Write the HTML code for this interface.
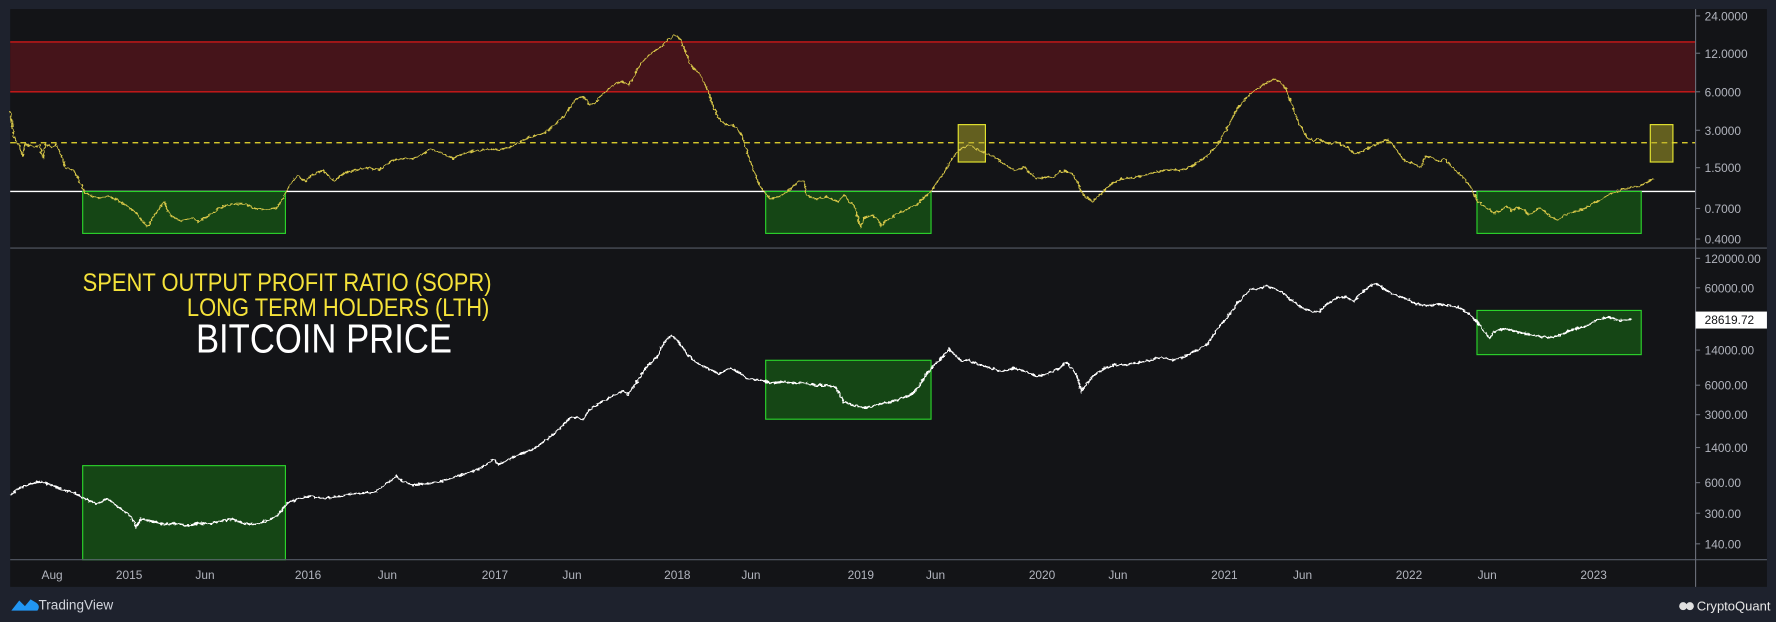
<!DOCTYPE html>
<html><head><meta charset="utf-8"><style>
html,body{margin:0;padding:0;background:#1e222d;width:1776px;height:622px;overflow:hidden}
svg{display:block}
text{font-family:"Liberation Sans",sans-serif}
</style></head><body>
<svg width="1776" height="622" viewBox="0 0 1568 549" preserveAspectRatio="none" xmlns="http://www.w3.org/2000/svg">
<defs>
<filter id="j" x="-5%" y="-20%" width="110%" height="140%">
<feTurbulence type="fractalNoise" baseFrequency="0.35" numOctaves="2" seed="3" result="n"/>
<feDisplacementMap in="SourceGraphic" in2="n" scale="3.5" xChannelSelector="R" yChannelSelector="G"/>
</filter>
</defs>
<rect x="0" y="0" width="1568" height="549" fill="#1e222d"/>
<rect x="9" y="8" width="1551" height="510" fill="#131417"/>
<rect x="9" y="37" width="1488" height="44" fill="#45141a"/>
<line x1="9" y1="37" x2="1497" y2="37" stroke="#d01818" stroke-width="1.2"/>
<line x1="9" y1="81" x2="1497" y2="81" stroke="#d01818" stroke-width="1.2"/>
<line x1="9" y1="126" x2="1497" y2="126" stroke="#f0e030" stroke-width="1.2" stroke-dasharray="5,4"/>
<line x1="9" y1="169" x2="1497" y2="169" stroke="#ffffff" stroke-width="1.2"/>
<g fill="#154615" stroke="#2bd42b" stroke-width="1">
<rect x="73" y="169" width="179" height="37"/>
<rect x="676" y="169" width="146" height="37"/>
<rect x="1304" y="169" width="145" height="37"/>
<rect x="73" y="411" width="179" height="83"/>
<rect x="676" y="318" width="146" height="52"/>
<rect x="1304" y="274" width="145" height="39"/>
</g>
<g fill="rgba(180,170,40,0.5)" stroke="#e8e830" stroke-width="1">
<rect x="846" y="110" width="24" height="33"/>
<rect x="1457" y="110" width="20" height="33"/>
</g>
<polyline filter="url(#j)" fill="none" stroke="#d8c848" stroke-width="1.1" points="9,98 12,120 17,128 20,138 22,127 30,130 35,128 38,140 40,127 45,130 50,128 55,140 58,148 65,150 70,160 75,170 80,173 88,175 95,173 100,175 110,180 120,188 130,200 135,192 140,185 145,178 150,190 160,195 170,192 175,196 185,190 195,183 205,180 215,180 225,184 235,185 245,183 250,175 255,165 262,155 270,160 275,155 285,150 290,155 295,160 305,152 315,150 325,148 335,150 345,142 355,140 365,140 375,135 380,132 390,135 400,140 410,135 420,133 430,132 440,132 450,130 460,125 470,120 480,118 490,110 500,100 508,88 515,85 520,92 525,92 530,85 540,76 548,72 555,75 560,67 565,57 575,47 585,40 590,35 595,31 600,34 605,45 610,58 618,65 625,80 630,95 635,105 640,110 645,110 650,112 655,120 660,135 665,150 670,162 675,170 680,175 690,173 700,165 705,160 710,160 712,172 720,176 730,174 740,178 745,172 750,178 755,183 758,195 760,200 763,192 770,190 775,193 778,200 782,195 790,190 800,185 810,180 815,175 822,169 828,160 835,150 840,140 845,135 850,130 855,128 860,130 865,133 870,135 880,140 885,144 895,150 905,148 910,153 915,158 925,156 930,157 935,152 940,151 945,152 950,158 955,170 960,175 965,178 970,173 975,168 980,163 990,158 1000,157 1010,155 1020,152 1030,150 1045,150 1055,145 1065,138 1075,128 1085,110 1090,100 1095,92 1105,82 1115,75 1125,70 1130,72 1135,78 1140,90 1145,105 1150,115 1155,122 1160,125 1163,122 1170,126 1175,127 1180,125 1185,128 1190,130 1195,135 1200,135 1205,132 1210,130 1220,125 1225,123 1230,128 1235,135 1240,142 1250,145 1255,148 1258,138 1265,139 1270,143 1275,140 1280,145 1285,150 1295,160 1300,168 1305,178 1315,185 1320,188 1325,186 1330,182 1335,186 1340,183 1345,185 1350,190 1355,186 1360,184 1365,188 1370,192 1375,194 1380,191 1385,188 1395,186 1400,184 1405,180 1410,178 1420,172 1430,168 1440,165 1445,165 1450,163 1456,160 1460,158"/>
<line x1="9" y1="219" x2="1560" y2="219" stroke="#555a66" stroke-width="1"/>
<line x1="9" y1="494" x2="1560" y2="494" stroke="#555a66" stroke-width="1"/>
<line x1="1497" y1="8" x2="1497" y2="518" stroke="#6a6e78" stroke-width="1"/>
<polyline filter="url(#j)" fill="none" stroke="#ffffff" stroke-width="1.4" points="9,437 15,432 25,428 35,425 45,428 55,432 65,435 75,440 85,445 95,440 105,448 115,455 120,465 125,458 135,460 145,463 155,462 165,464 175,462 185,462 195,460 205,458 215,462 225,463 235,460 245,455 255,443 265,440 275,438 285,440 300,438 310,436 320,435 330,435 340,428 345,424 350,420 355,425 365,428 375,427 390,425 405,420 420,415 430,410 435,405 440,410 450,405 460,400 470,397 480,390 490,382 497,375 505,368 515,370 520,362 530,355 540,350 550,345 555,348 560,340 565,333 570,325 575,320 580,315 585,305 590,298 593,296 598,300 605,310 612,318 618,322 625,325 635,330 645,325 655,330 660,335 670,335 680,338 690,337 700,338 710,338 720,340 730,340 738,342 745,355 755,358 765,360 775,357 785,355 795,352 805,348 812,340 818,330 825,322 832,315 838,308 842,312 848,318 855,318 865,322 875,325 885,328 895,325 905,328 915,332 925,330 935,325 942,320 950,330 955,345 960,338 965,332 975,325 985,322 995,322 1005,320 1015,318 1025,315 1035,318 1045,315 1055,310 1065,305 1075,290 1085,278 1092,268 1098,262 1105,255 1112,255 1118,252 1125,255 1132,258 1140,265 1150,272 1158,275 1165,275 1172,268 1180,263 1188,262 1195,266 1202,258 1210,252 1215,250 1222,255 1230,260 1240,263 1250,268 1260,270 1270,268 1280,270 1290,272 1298,278 1305,285 1310,292 1315,298 1320,292 1330,290 1340,293 1350,295 1360,297 1370,298 1380,295 1385,292 1392,290 1400,288 1410,282 1420,280 1430,283 1440,282"/>
<text x="73" y="257" fill="#f5e23a" font-size="22" transform="translate(73,0) scale(0.88,1) translate(-73,0)">SPENT OUTPUT PROFIT RATIO (SOPR)</text>
<text x="165" y="279" fill="#f5e23a" font-size="22" transform="translate(165,0) scale(0.88,1) translate(-165,0)">LONG TERM HOLDERS (LTH)</text>
<text x="173" y="311" fill="#ffffff" font-size="36" transform="translate(173,0) scale(0.85,1) translate(-173,0)">BITCOIN PRICE</text>
<g fill="#b2b5be" font-size="10.5">
<text x="1505" y="18">24.0000</text><text x="1505" y="51">12.0000</text><text x="1505" y="85">6.0000</text><text x="1505" y="119">3.0000</text><text x="1505" y="152">1.5000</text><text x="1505" y="188">0.7000</text><text x="1505" y="215">0.4000</text>
<text x="1505" y="232">120000.00</text><text x="1505" y="258">60000.00</text><text x="1505" y="313">14000.00</text><text x="1505" y="344">6000.00</text><text x="1505" y="370">3000.00</text><text x="1505" y="399">1400.00</text><text x="1505" y="430">600.00</text><text x="1505" y="457">300.00</text><text x="1505" y="484">140.00</text>
</g>
<g stroke="#6a6e78"><line x1="1497" y1="14" x2="1501" y2="14"/><line x1="1497" y1="47" x2="1501" y2="47"/><line x1="1497" y1="81" x2="1501" y2="81"/><line x1="1497" y1="115" x2="1501" y2="115"/><line x1="1497" y1="148" x2="1501" y2="148"/><line x1="1497" y1="184" x2="1501" y2="184"/><line x1="1497" y1="211" x2="1501" y2="211"/><line x1="1497" y1="228" x2="1501" y2="228"/><line x1="1497" y1="254" x2="1501" y2="254"/><line x1="1497" y1="309" x2="1501" y2="309"/><line x1="1497" y1="340" x2="1501" y2="340"/><line x1="1497" y1="366" x2="1501" y2="366"/><line x1="1497" y1="395" x2="1501" y2="395"/><line x1="1497" y1="426" x2="1501" y2="426"/><line x1="1497" y1="453" x2="1501" y2="453"/><line x1="1497" y1="480" x2="1501" y2="480"/></g>
<rect x="1497" y="275" width="63" height="15" fill="#ffffff"/>
<text x="1505" y="286" fill="#131417" font-size="10.5">28619.72</text>
<g fill="#b2b5be" font-size="10.5" text-anchor="middle">
<text x="46" y="511">Aug</text><text x="114" y="511">2015</text><text x="181" y="511">Jun</text><text x="272" y="511">2016</text><text x="342" y="511">Jun</text><text x="437" y="511">2017</text><text x="505" y="511">Jun</text><text x="598" y="511">2018</text><text x="663" y="511">Jun</text><text x="760" y="511">2019</text><text x="826" y="511">Jun</text><text x="920" y="511">2020</text><text x="987" y="511">Jun</text><text x="1081" y="511">2021</text><text x="1150" y="511">Jun</text><text x="1244" y="511">2022</text><text x="1313" y="511">Jun</text><text x="1407" y="511">2023</text>
</g>
<path d="M10,539 L17,530 L22,535 L27,529 L32,532 Q36,535 33,539 Z" fill="#2196f3"/>
<text x="34" y="538" fill="#d1d4dc" font-size="12">TradingView</text>
<g fill="#e0e0e0"><circle cx="1486" cy="535" r="3.5"/><circle cx="1492" cy="535" r="3.5"/></g>
<text x="1498" y="539" fill="#e8e8e8" font-size="11.5">CryptoQuant</text>
</svg>
</body></html>
